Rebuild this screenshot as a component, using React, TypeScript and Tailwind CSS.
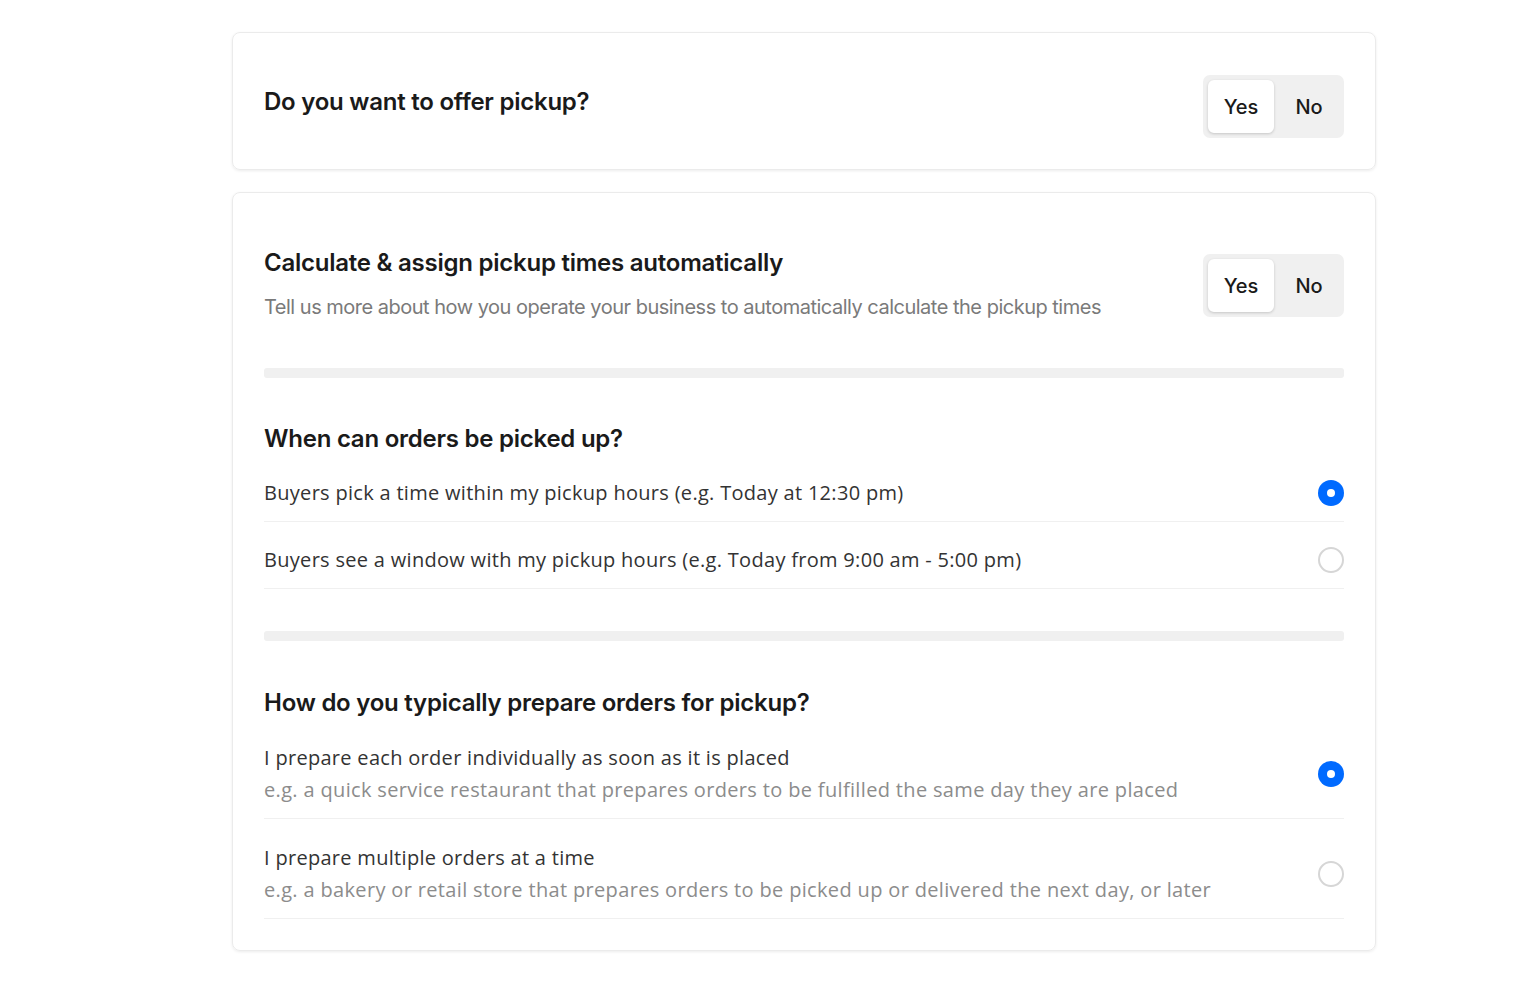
import React, { useState } from "react";

type Option = {
  id: string;
  label: string;
  hint?: string;
};

const headingFont = { fontFamily: "Inter, 'Noto Sans', sans-serif" };
const bodyFont = { fontFamily: "'Open Sans', 'Noto Sans', sans-serif" };

const YesNo = ({ value, onChange }: { value: boolean; onChange: (v: boolean) => void }) => {
  return (
    <div className="flex shrink-0 rounded-[7px] bg-[#f0f0f0] p-[5px]" style={headingFont}>
      <button
        onClick={() => onChange(true)}
        className={
          value
            ? "h-[53px] w-[66px] rounded-[6px] bg-white text-[20px] font-medium text-[#1a1a1a] shadow-[0_1px_3px_rgba(0,0,0,0.18)]"
            : "h-[53px] w-[66px] rounded-[6px] text-[20px] font-medium text-[#1a1a1a]"
        }
      >
        Yes
      </button>
      <button
        onClick={() => onChange(false)}
        className={
          !value
            ? "h-[53px] w-[65px] rounded-[6px] bg-white pl-[5px] text-[20px] font-medium text-[#1a1a1a] shadow-[0_1px_3px_rgba(0,0,0,0.18)]"
            : "h-[53px] w-[65px] rounded-[6px] pl-[5px] text-[20px] font-medium text-[#1a1a1a]"
        }
      >
        No
      </button>
    </div>
  );
};

const Radio = ({ checked }: { checked: boolean }) =>
  checked ? (
    <span className="flex h-[26px] w-[26px] shrink-0 items-center justify-center rounded-full bg-[#006aff]">
      <span className="h-[8px] w-[8px] rounded-full bg-white" />
    </span>
  ) : (
    <span className="h-[26px] w-[26px] shrink-0 rounded-full border-2 border-[#d6d6d6] bg-white" />
  );

const Divider = () => <div className="h-[10px] rounded-[3px] bg-[#f0f0f0]" />;

const SectionTitle = ({ children }: { children: React.ReactNode }) => (
  <h3 className="text-[24px] font-semibold leading-[32px] tracking-[-0.01em] text-[#1a1a1a]" style={headingFont}>
    {children}
  </h3>
);

const pickupWindows: Option[] = [
  { id: "time", label: "Buyers pick a time within my pickup hours (e.g. Today at 12:30 pm)" },
  { id: "window", label: "Buyers see a window with my pickup hours (e.g. Today from 9:00 am - 5:00 pm)" },
];

const prepStyles: Option[] = [
  {
    id: "individual",
    label: "I prepare each order individually as soon as it is placed",
    hint: "e.g. a quick service restaurant that prepares orders to be fulfilled the same day they are placed",
  },
  {
    id: "batch",
    label: "I prepare multiple orders at a time",
    hint: "e.g. a bakery or retail store that prepares orders to be picked up or delivered the next day, or later",
  },
];

export default function App() {
  const [offerPickup, setOfferPickup] = useState(true);
  const [autoTimes, setAutoTimes] = useState(true);
  const [windowChoice, setWindowChoice] = useState("time");
  const [prepChoice, setPrepChoice] = useState("individual");

  return (
    <div className="min-h-screen bg-white pb-[36px] pl-[232px] pt-[32px]">
      <div className="flex w-[1144px] flex-col gap-[22px]">
        {/* Offer pickup */}
        <div className="rounded-[8px] border border-[#ebebeb] px-[31px] pb-[31px] pt-[31px] shadow-[0_1px_3px_rgba(0,0,0,0.08)]">
          <div className="flex items-start justify-between">
            <div className="mt-[22px]">
              <SectionTitle>Do you want to offer pickup?</SectionTitle>
            </div>
            <div className="mt-[11px]">
              <YesNo value={offerPickup} onChange={setOfferPickup} />
            </div>
          </div>
        </div>

        {/* Pickup time settings */}
        <div className="rounded-[8px] border border-[#ebebeb] px-[31px] pb-[31px] pt-[31px] shadow-[0_1px_3px_rgba(0,0,0,0.08)]">
          <div className="flex items-start justify-between">
            <div className="mt-[23px]">
              <SectionTitle>Calculate &amp; assign pickup times automatically</SectionTitle>
              <p className="mt-[14px] text-[20px] leading-[28px] tracking-[-0.025em] text-[#7a7a7a]" style={headingFont}>
                Tell us more about how you operate your business to automatically calculate the pickup times
              </p>
            </div>
            <div className="mt-[30px]">
              <YesNo value={autoTimes} onChange={setAutoTimes} />
            </div>
          </div>

          <div className="mt-[47px]">
            <Divider />
          </div>

          <div className="mt-[45px]">
            <SectionTitle>When can orders be picked up?</SectionTitle>
            <div>
              {pickupWindows.map((o) => (
                <label
                  key={o.id}
                  onClick={() => setWindowChoice(o.id)}
                  className="flex cursor-pointer items-center justify-between border-b border-[#f0f0f0] pb-[14px] pt-[24px]"
                >
                  <span className="text-[20px] leading-[28px] tracking-[0.015em] text-[#333333]" style={bodyFont}>
                    {o.label}
                  </span>
                  <Radio checked={windowChoice === o.id} />
                </label>
              ))}
            </div>
          </div>

          <div className="mt-[42px]">
            <Divider />
          </div>

          <div className="mt-[46px]">
            <SectionTitle>How do you typically prepare orders for pickup?</SectionTitle>
            <div>
              {prepStyles.map((o) => (
                <label
                  key={o.id}
                  onClick={() => setPrepChoice(o.id)}
                  className="flex cursor-pointer items-center justify-between border-b border-[#f0f0f0] pb-[12px] pt-[23px]"
                >
                  <span className="flex flex-col" style={bodyFont}>
                    <span className="text-[20px] leading-[32px] tracking-[0.015em] text-[#333333]">{o.label}</span>
                    <span className="text-[20px] leading-[32px] tracking-[0.017em] text-[#8c8c8c]">{o.hint}</span>
                  </span>
                  <Radio checked={prepChoice === o.id} />
                </label>
              ))}
            </div>
          </div>
        </div>
      </div>
    </div>
  );
}
